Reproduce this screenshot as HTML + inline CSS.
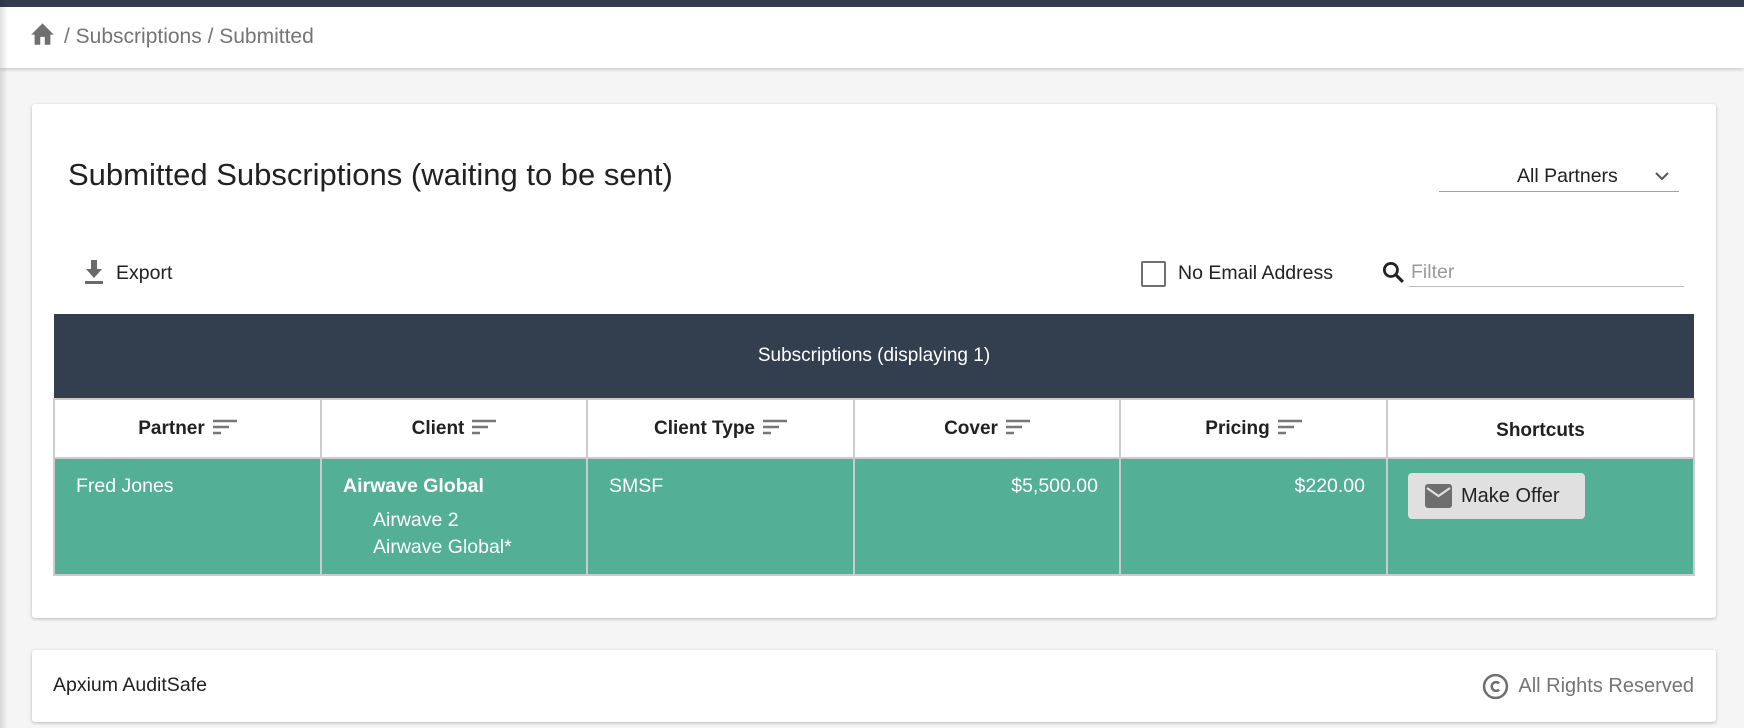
<!DOCTYPE html>
<html><head><meta charset="utf-8"><style>
*{margin:0;padding:0;box-sizing:border-box}
body{width:1744px;height:728px;background:#f5f5f5;font-family:"Liberation Sans",Arial,sans-serif;position:relative;overflow:hidden;color:#212121}
.a{position:absolute;white-space:nowrap}
.topbar{left:0;top:0;width:1744px;height:7px;background:#333f4f}
.crumb{left:0;top:7px;width:1744px;height:61px;background:#fff;box-shadow:0 2px 3px rgba(0,0,0,.15)}
.lsh{left:0;top:0;width:8px;height:728px;background:linear-gradient(to right,rgba(0,0,0,.12),rgba(0,0,0,0))}
.card{background:#fff;border-radius:3px;box-shadow:0 1px 3px rgba(0,0,0,.25)}
table{position:absolute;left:53px;top:314px;width:1642px;border-collapse:collapse;table-layout:fixed}
td,th{border:2px solid #cccccc}
th.h{background:#333f4f;color:#fff;font-weight:normal;font-size:19px;height:85px;border:none}
.hr th{height:59px;font-size:19px;font-weight:bold;background:#fff;color:#212121}
.dr td{background:#53b095;color:#fff;font-size:19.5px;vertical-align:top;height:117px;padding:16px 21px 0}
.sort{display:inline-block;vertical-align:middle;margin-left:8px;width:24px;height:18px}
</style></head><body>
<div class="a topbar"></div>
<div class="a crumb"></div>
<svg class="a" style="left:29px;top:22px" width="27" height="23" viewBox="0 0 24 20"><path d="M10 20v-7h4v7h5v-9h3L12 1 2 11h3v9z" fill="#6f6f6f"/></svg>
<div class="a" style="left:64px;top:25px;font-size:21px;color:#757575">/ Subscriptions / Submitted</div>
<div class="a lsh"></div>

<div class="a card" style="left:32px;top:104px;width:1684px;height:514px"></div>
<div class="a" style="left:68px;top:157px;font-size:31px;color:#212121">Submitted Subscriptions (waiting to be sent)</div>
<div class="a" style="left:1439px;top:191px;width:240px;border-top:1px solid #a0a0a0"></div>
<div class="a" style="left:1517px;top:165px;font-size:19.5px">All Partners</div>
<svg class="a" style="left:1654px;top:170px" width="16" height="12" viewBox="0 0 16 12"><path d="M2 3l6 6 6-6" stroke="#555" stroke-width="2" fill="none"/></svg>
<svg class="a" style="left:84px;top:260px" width="20" height="24" viewBox="0 0 20 24"><path d="M7 0h6v9h5l-8 9-8-9h5z M1 21h18v3H1z" fill="#6a6a6a"/></svg>
<div class="a" style="left:116px;top:262px;font-size:19.5px">Export</div>
<div class="a" style="left:1141px;top:261px;width:25px;height:26px;border:2.5px solid #707070;border-radius:2px"></div>
<div class="a" style="left:1178px;top:262px;font-size:19.5px">No Email Address</div>
<svg class="a" style="left:1381px;top:260px" width="25" height="25" viewBox="0 0 24 24"><circle cx="9.5" cy="9.5" r="6.3" stroke="#222" stroke-width="2.6" fill="none"/><path d="M14 14l7 7" stroke="#222" stroke-width="3"/></svg>
<div class="a" style="left:1411px;top:261px;font-size:19.5px;color:#9a9a9a">Filter</div>
<div class="a" style="left:1409px;top:286px;width:275px;border-top:1px solid #bdbdbd"></div>

<table>
<colgroup><col style="width:267px"><col style="width:266px"><col style="width:267px"><col style="width:266px"><col style="width:267px"><col></colgroup>
<tr><th class="h" colspan="6">Subscriptions (displaying 1)</th></tr>
<tr class="hr">
<th>Partner<svg class="sort" viewBox="0 0 24 18"><path d="M0 2h24M0 8h16M0 14h8" stroke="#777" stroke-width="2.5"/></svg></th>
<th>Client<svg class="sort" viewBox="0 0 24 18"><path d="M0 2h24M0 8h16M0 14h8" stroke="#777" stroke-width="2.5"/></svg></th>
<th>Client Type<svg class="sort" viewBox="0 0 24 18"><path d="M0 2h24M0 8h16M0 14h8" stroke="#777" stroke-width="2.5"/></svg></th>
<th>Cover<svg class="sort" viewBox="0 0 24 18"><path d="M0 2h24M0 8h16M0 14h8" stroke="#777" stroke-width="2.5"/></svg></th>
<th>Pricing<svg class="sort" viewBox="0 0 24 18"><path d="M0 2h24M0 8h16M0 14h8" stroke="#777" stroke-width="2.5"/></svg></th>
<th style="padding-top:5px">Shortcuts</th></tr>
<tr class="dr">
<td>Fred Jones</td>
<td><b>Airwave Global</b><div style="padding-left:30px;margin-top:9px;line-height:27px">Airwave 2<br>Airwave Global*</div></td>
<td>SMSF</td>
<td style="text-align:right">$5,500.00</td>
<td style="text-align:right">$220.00</td>
<td style="padding:0"></td></tr>
</table>
<div class="a" style="left:1408px;top:473px;width:177px;height:46px;background:#e0e0e0;border-radius:4px"></div>
<svg class="a" style="left:1425px;top:484px" width="27" height="24" viewBox="0 0 27 24"><rect x="0" y="0" width="27" height="24" rx="3" fill="#6e6e6e"/><path d="M2 4l11.5 8L25 4" stroke="#e0e0e0" stroke-width="2.2" fill="none"/></svg>
<div class="a" style="left:1461px;top:485px;font-size:20px;color:#222">Make Offer</div>

<div class="a card" style="left:32px;top:650px;width:1684px;height:72px"></div>
<div class="a" style="left:53px;top:674px;font-size:19.5px">Apxium AuditSafe</div>
<div class="a" style="right:50px;top:673px;font-size:20px;color:#757575;display:flex;align-items:center"><svg width="27" height="27" viewBox="0 0 26 26" style="margin-right:9px"><circle cx="13" cy="13" r="11" stroke="#6e6e6e" stroke-width="2.4" fill="none"/><path d="M16.5 10a4.2 4.2 0 1 0 0 6" stroke="#6e6e6e" stroke-width="2.4" fill="none"/></svg>All Rights Reserved</div>
</body></html>
